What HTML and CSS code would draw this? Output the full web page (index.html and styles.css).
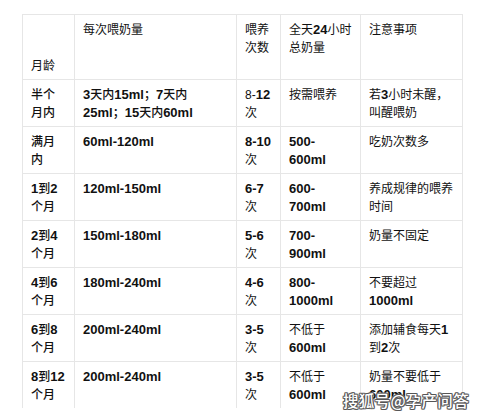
FILE: index.html
```html
<!DOCTYPE html>
<html lang="zh">
<head>
<meta charset="utf-8">
<title>喂奶量表</title>
<link rel="stylesheet" href="styles.css">
</head>
<body>
<div class="page">
  <div class="clip">
    <table class="feed">
      <colgroup>
        <col class="c1"><col class="c2"><col class="c3"><col class="c4"><col class="c5">
      </colgroup>
      <tr class="head">
        <td class="age">月龄</td>
        <td>每次喂奶量</td>
        <td>喂养<br>次数</td>
        <td>全天<b>24</b>小时<br>总奶量</td>
        <td>注意事项</td>
      </tr>
      <tr>
        <td class="strong">半个<br>月内</td>
        <td class="strong"><b>3</b>天内<b>15ml</b>；<b>7</b>天内<br><b>25ml</b>；<b>15</b>天内<b>60ml</b></td>
        <td>8-<b>12</b><br>次</td>
        <td>按需喂养</td>
        <td>若<b>3</b>小时未醒，<br>叫醒喂奶</td>
      </tr>
      <tr>
        <td class="strong">满月<br>内</td>
        <td class="strong"><b>60ml-120ml</b></td>
        <td><b>8-10</b><br>次</td>
        <td><b>500-<br>600ml</b></td>
        <td>吃奶次数多</td>
      </tr>
      <tr>
        <td class="strong"><b>1</b>到<b>2</b><br>个月</td>
        <td class="strong"><b>120ml-150ml</b></td>
        <td><b>6-7</b><br>次</td>
        <td><b>600-<br>700ml</b></td>
        <td>养成规律的喂养<br>时间</td>
      </tr>
      <tr>
        <td class="strong"><b>2</b>到<b>4</b><br>个月</td>
        <td class="strong"><b>150ml-180ml</b></td>
        <td><b>5-6</b><br>次</td>
        <td><b>700-<br>900ml</b></td>
        <td>奶量不固定</td>
      </tr>
      <tr>
        <td class="strong"><b>4</b>到<b>6</b><br>个月</td>
        <td class="strong"><b>180ml-240ml</b></td>
        <td><b>4-6</b><br>次</td>
        <td><b>800-<br>1000ml</b></td>
        <td>不要超过<br><b>1000ml</b></td>
      </tr>
      <tr>
        <td class="strong"><b>6</b>到<b>8</b><br>个月</td>
        <td class="strong"><b>200ml-240ml</b></td>
        <td><b>3-5</b><br>次</td>
        <td>不低于<br><b>600ml</b></td>
        <td>添加辅食每天<b>1</b><br>到<b>2</b>次</td>
      </tr>
      <tr>
        <td class="strong"><b>8</b>到<b>12</b><br>个月</td>
        <td class="strong"><b>200ml-240ml</b></td>
        <td><b>3-5</b><br>次</td>
        <td>不低于<br><b>600ml</b></td>
        <td>奶量不要低于<br><b>600ml</b></td>
      </tr>
    </table>
  </div>
  <div class="watermark">搜狐号@孕产问答</div>
</div>
</body>
</html>
```
FILE: styles.css
```css
html, body {
  margin: 0;
  padding: 0;
  background: #fff;
}
.page {
  position: relative;
  width: 482px;
  height: 417px;
  overflow: hidden;
  font-family: "Liberation Sans", "Noto Sans CJK SC", sans-serif;
  color: #111;
}
.clip {
  margin: 14px 0 0 22px;
  height: 394px;
  overflow: hidden;
}
.feed {
  border-collapse: collapse;
  table-layout: fixed;
  width: 440px;
  font-size: 12px;
  line-height: 18px;
}
.c1 { width: 52px; }
.c2 { width: 162px; }
.c3 { width: 44px; }
.c4 { width: 80px; }
.c5 { width: 102px; }
.feed td {
  border: 1px solid #e6e6e6;
  padding: 6px 4px 4px 8px;
  vertical-align: top;
  white-space: nowrap;
  height: 36px;
}
.feed tr.head td {
  height: 54px;
}
.feed td.age {
  vertical-align: bottom;
}
.feed td.strong {
  font-weight: 500;
}
.feed b {
  font-weight: 700;
  font-size: 13px;
  line-height: 17px;
}
.watermark {
  position: absolute;
  left: 343px;
  top: 389px;
  font-family: "Noto Sans CJK SC", sans-serif;
  font-size: 15.5px;
  line-height: 22px;
  font-weight: 500;
  color: #fff;
  letter-spacing: 0.3px;
  text-shadow: 1px 0 #555, -1px 0 #555, 0 1px #555, 0 -1px #555, 1px 1px #777, -1px -1px #777, 1px -1px #777, -1px 1px #777;
}
```
